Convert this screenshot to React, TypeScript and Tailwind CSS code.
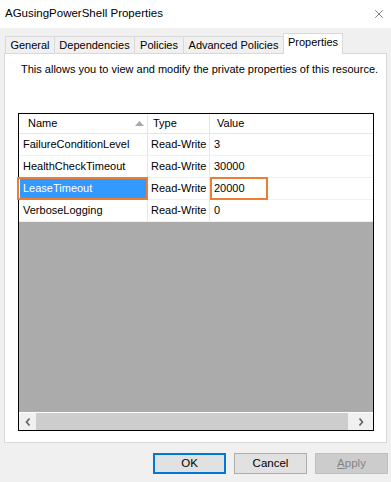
import { X } from "lucide-react";

const rows = [
  { name: "FailureConditionLevel", type: "Read-Write", value: "3" },
  { name: "HealthCheckTimeout", type: "Read-Write", value: "30000" },
  { name: "LeaseTimeout", type: "Read-Write", value: "20000", selected: true },
  { name: "VerboseLogging", type: "Read-Write", value: "0" },
];

const tabs = ["General", "Dependencies", "Policies", "Advanced Policies"];
const tabWidths = ["w-[49px]", "w-[80px]", "w-[49px]", "w-[100px]"];

export default function App() {
  return (
    <div
      className="w-[391px] h-[482px] bg-[#f0f0f0] flex flex-col text-black text-[11px] leading-none"
      style={{ fontFamily: '"Liberation Sans", Arial, sans-serif' }}
    >
      {/* title bar */}
      <div className="h-[28px] bg-white flex items-center justify-between pl-[5px] pr-[5px]">
        <span className="text-[11.5px]">AGusingPowerShell Properties</span>
        <X className="w-[14px] h-[14px] text-[#222]" strokeWidth={1} />
      </div>

      <div className="px-[4px] pt-[5px]">
        {/* tabs */}
        <div className="flex items-end h-[20px] pl-[1px]">
          {tabs.map((t, i) => (
            <div
              key={t}
              className={`${tabWidths[i]} h-[17px] border-l border-t border-[#d9d9d9] bg-[#f0f0f0] flex items-center justify-center`}
            >
              {t}
            </div>
          ))}
          <div className="w-[60px] h-[21px] -mb-px relative z-10 border-x border-t border-[#d9d9d9] bg-white flex items-center justify-center pb-[3px]">
            Properties
          </div>
        </div>

        {/* panel */}
        <div className="h-[390px] border border-[#d9d9d9] bg-white pt-[10px]">
          <div className="pl-[16px]">This allows you to view and modify the private properties of this resource.</div>

          <div className="ml-[13px] mt-[38px] w-[356px] h-[318px] border border-black flex flex-col bg-[#ababab]">
            {/* header */}
            <div className="h-[20px] bg-white flex border-b border-[#e5e5e5]">
              <div className="w-[129px] border-r border-[#e5e5e5] flex items-center justify-between pl-[9px] pr-[3px]">
                <span>Name</span>
                <svg width="9" height="5" viewBox="0 0 9 5">
                  <path d="M0 5 L4.5 0 L9 5 Z" fill="#a8a8a8" />
                </svg>
              </div>
              <div className="w-[62px] border-r border-[#e5e5e5] flex items-center pl-[5px]">Type</div>
              <div className="flex-1 flex items-center pl-[7px]">Value</div>
            </div>

            {rows.map((r) => (
              <div key={r.name} className="h-[22px] bg-white flex border-b border-[#f0f0f0]">
                <div className="w-[129px] border-r border-[#e5e5e5] relative flex">
                  {r.selected ? (
                    <>
                      <div className="flex-1 bg-[#3399ff] text-white flex items-center pl-[3px] my-[1px] ml-[1px]">
                        {r.name}
                      </div>
                      <div className="absolute -left-[2px] -top-[1px] -right-[1px] -bottom-[1px] border-2 border-[#ed7d31]" />
                    </>
                  ) : (
                    <div className="flex-1 flex items-center pl-[4px]">{r.name}</div>
                  )}
                </div>
                <div className="w-[62px] border-r border-[#e5e5e5] flex items-center pl-[3px]">{r.type}</div>
                <div className="flex-1 relative flex items-center pl-[4px]">
                  {r.value}
                  {r.selected && (
                    <div className="absolute left-0 -top-[1px] w-[58px] -bottom-[1px] border-2 border-[#ed7d31]" />
                  )}
                </div>
              </div>
            ))}

            <div className="flex-1 border-b border-white" />

            {/* horizontal scrollbar */}
            <div className="h-[17px] bg-[#f0f0f0] flex items-center">
              <div className="w-[17px] h-full flex items-center justify-center text-[#606060]">
                <svg width="6" height="8" viewBox="0 0 6 8">
                  <path d="M4.5 0.5 L1.5 4 L4.5 7.5" stroke="#606060" strokeWidth="1.6" fill="none" />
                </svg>
              </div>
              <div className="flex-1 h-full bg-[#cdcdcd]" />
              <div className="w-[25px] h-full flex items-center justify-center">
                <svg width="6" height="8" viewBox="0 0 6 8">
                  <path d="M1.5 0.5 L4.5 4 L1.5 7.5" stroke="#606060" strokeWidth="1.6" fill="none" />
                </svg>
              </div>
            </div>
          </div>
        </div>
      </div>

      {/* buttons */}
      <div className="flex justify-end gap-[8px] pr-[3px] mt-[10px] text-[11.5px]">
        <button className="w-[73px] h-[21px] bg-[#e1e1e1] border-2 border-[#0078d7]">OK</button>
        <button className="w-[73px] h-[21px] bg-[#e1e1e1] border border-[#adadad]">Cancel</button>
        <button className="w-[73px] h-[21px] bg-[#cccccc] border border-[#bfbfbf] text-[#838383]">
          <span className="underline">A</span>pply
        </button>
      </div>
    </div>
  );
}
